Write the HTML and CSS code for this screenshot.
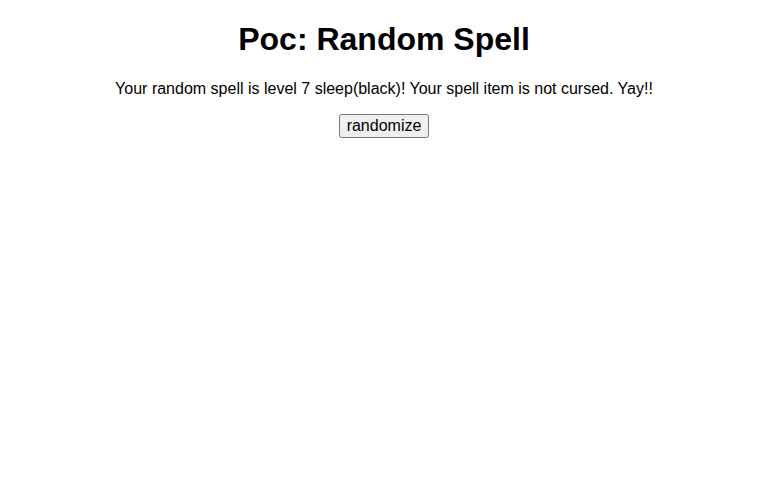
FILE: index.html
```html
<!DOCTYPE html>
<html lang="en">
<head>
  <meta charset="UTF-8" />
  <title>Poc: Random Spell</title>
  <link rel="stylesheet" href="styles.css">
</head>
<body>
  <div class="app">
    <h1>Poc: Random Spell</h1>
    <p id="result">Your random spell is level 7 sleep(black)! Your spell item is not cursed. Yay!!</p>
    <button id="randomize">randomize</button>
  </div>
</body>
</html>
```
FILE: styles.css
```css
body {
  font-family: "Liberation Sans", Arial, sans-serif;
  margin: 0;
}
.app {
  text-align: center;
}
h1 {
  font-size: 32px;
  margin: 21px 0 22px;
}
p {
  font-size: 16px;
  margin: 16px 0;
}
button {
  font-family: "Liberation Sans", Arial, sans-serif;
  font-size: 16px;
}
```
